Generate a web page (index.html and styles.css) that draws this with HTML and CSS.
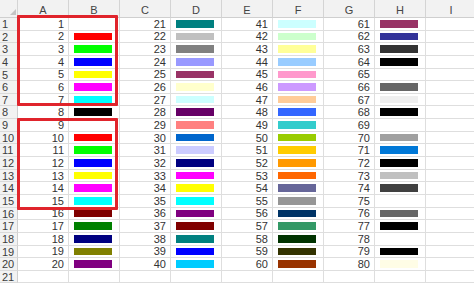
FILE: index.html
```html
<!DOCTYPE html>
<html lang="ja">
<head>
<meta charset="utf-8">
<title>ColorIndex</title>
<link rel="stylesheet" href="styles.css">
</head>
<body>
<div class="sheet">
  <div class="grid">
    <div class="hd corner"><svg width="18" height="18" viewBox="0 0 18 18"><path d="M16 9 L16 15 L10 15 Z" fill="#c4c4c4"/></svg></div>
    <div class="hd col">A</div><div class="hd col">B</div><div class="hd col">C</div><div class="hd col">D</div><div class="hd col">E</div><div class="hd col">F</div><div class="hd col">G</div><div class="hd col">H</div><div class="hd col">I</div>

    <div class="rh">1</div><div class="c n">1</div><div class="c"></div><div class="c n">21</div><div class="c"><i class="sw" style="background:#008080"></i></div><div class="c n">41</div><div class="c"><i class="sw" style="background:#ccffff"></i></div><div class="c n">61</div><div class="c"><i class="sw" style="background:#993366"></i></div><div class="c"></div>
    <div class="rh">2</div><div class="c n">2</div><div class="c"><i class="sw" style="background:#ff0000"></i></div><div class="c n">22</div><div class="c"><i class="sw" style="background:#c0c0c0"></i></div><div class="c n">42</div><div class="c"><i class="sw" style="background:#ccffcc"></i></div><div class="c n">62</div><div class="c"><i class="sw" style="background:#333399"></i></div><div class="c"></div>
    <div class="rh">3</div><div class="c n">3</div><div class="c"><i class="sw" style="background:#00ff00"></i></div><div class="c n">23</div><div class="c"><i class="sw" style="background:#808080"></i></div><div class="c n">43</div><div class="c"><i class="sw" style="background:#ffff99"></i></div><div class="c n">63</div><div class="c"><i class="sw" style="background:#333333"></i></div><div class="c"></div>
    <div class="rh">4</div><div class="c n">4</div><div class="c"><i class="sw" style="background:#0000ff"></i></div><div class="c n">24</div><div class="c"><i class="sw" style="background:#9999ff"></i></div><div class="c n">44</div><div class="c"><i class="sw" style="background:#99ccff"></i></div><div class="c n">64</div><div class="c"><i class="sw" style="background:#000000"></i></div><div class="c"></div>
    <div class="rh">5</div><div class="c n">5</div><div class="c"><i class="sw" style="background:#ffff00"></i></div><div class="c n">25</div><div class="c"><i class="sw" style="background:#993366"></i></div><div class="c n">45</div><div class="c"><i class="sw" style="background:#ff99cc"></i></div><div class="c n">65</div><div class="c"></div><div class="c"></div>
    <div class="rh">6</div><div class="c n">6</div><div class="c"><i class="sw" style="background:#ff00ff"></i></div><div class="c n">26</div><div class="c"><i class="sw" style="background:#ffffcc"></i></div><div class="c n">46</div><div class="c"><i class="sw" style="background:#cc99ff"></i></div><div class="c n">66</div><div class="c"><i class="sw" style="background:#666666"></i></div><div class="c"></div>
    <div class="rh">7</div><div class="c n">7</div><div class="c"><i class="sw" style="background:#00ffff"></i></div><div class="c n">27</div><div class="c"><i class="sw" style="background:#ccffff"></i></div><div class="c n">47</div><div class="c"><i class="sw" style="background:#ffcc99"></i></div><div class="c n">67</div><div class="c"><i class="sw" style="background:#efefef"></i></div><div class="c"></div>
    <div class="rh">8</div><div class="c n">8</div><div class="c"><i class="sw" style="background:#000000"></i></div><div class="c n">28</div><div class="c"><i class="sw" style="background:#660066"></i></div><div class="c n">48</div><div class="c"><i class="sw" style="background:#3366ff"></i></div><div class="c n">68</div><div class="c"><i class="sw" style="background:#000000"></i></div><div class="c"></div>
    <div class="rh">9</div><div class="c n">9</div><div class="c"></div><div class="c n">29</div><div class="c"><i class="sw" style="background:#ff8080"></i></div><div class="c n">49</div><div class="c"><i class="sw" style="background:#33cccc"></i></div><div class="c n">69</div><div class="c"></div><div class="c"></div>
    <div class="rh">10</div><div class="c n">10</div><div class="c"><i class="sw" style="background:#ff0000"></i></div><div class="c n">30</div><div class="c"><i class="sw" style="background:#0066cc"></i></div><div class="c n">50</div><div class="c"><i class="sw" style="background:#99cc00"></i></div><div class="c n">70</div><div class="c"><i class="sw" style="background:#a0a0a0"></i></div><div class="c"></div>
    <div class="rh">11</div><div class="c n">11</div><div class="c"><i class="sw" style="background:#00ff00"></i></div><div class="c n">31</div><div class="c"><i class="sw" style="background:#ccccff"></i></div><div class="c n">51</div><div class="c"><i class="sw" style="background:#ffcc00"></i></div><div class="c n">71</div><div class="c"><i class="sw" style="background:#0078d7"></i></div><div class="c"></div>
    <div class="rh">12</div><div class="c n">12</div><div class="c"><i class="sw" style="background:#0000ff"></i></div><div class="c n">32</div><div class="c"><i class="sw" style="background:#000080"></i></div><div class="c n">52</div><div class="c"><i class="sw" style="background:#ff9900"></i></div><div class="c n">72</div><div class="c"><i class="sw" style="background:#000000"></i></div><div class="c"></div>
    <div class="rh">13</div><div class="c n">13</div><div class="c"><i class="sw" style="background:#ffff00"></i></div><div class="c n">33</div><div class="c"><i class="sw" style="background:#ff00ff"></i></div><div class="c n">53</div><div class="c"><i class="sw" style="background:#ff6600"></i></div><div class="c n">73</div><div class="c"><i class="sw" style="background:#c0c0c0"></i></div><div class="c"></div>
    <div class="rh">14</div><div class="c n">14</div><div class="c"><i class="sw" style="background:#ff00ff"></i></div><div class="c n">34</div><div class="c"><i class="sw" style="background:#ffff00"></i></div><div class="c n">54</div><div class="c"><i class="sw" style="background:#666699"></i></div><div class="c n">74</div><div class="c"><i class="sw" style="background:#404040"></i></div><div class="c"></div>
    <div class="rh">15</div><div class="c n">15</div><div class="c"><i class="sw" style="background:#00ffff"></i></div><div class="c n">35</div><div class="c"><i class="sw" style="background:#00ffff"></i></div><div class="c n">55</div><div class="c"><i class="sw" style="background:#969696"></i></div><div class="c n">75</div><div class="c"></div><div class="c"></div>
    <div class="rh">16</div><div class="c n">16</div><div class="c"><i class="sw" style="background:#800000"></i></div><div class="c n">36</div><div class="c"><i class="sw" style="background:#800080"></i></div><div class="c n">56</div><div class="c"><i class="sw" style="background:#003366"></i></div><div class="c n">76</div><div class="c"><i class="sw" style="background:#666666"></i></div><div class="c"></div>
    <div class="rh">17</div><div class="c n">17</div><div class="c"><i class="sw" style="background:#008000"></i></div><div class="c n">37</div><div class="c"><i class="sw" style="background:#800000"></i></div><div class="c n">57</div><div class="c"><i class="sw" style="background:#339966"></i></div><div class="c n">77</div><div class="c"><i class="sw" style="background:#000000"></i></div><div class="c"></div>
    <div class="rh">18</div><div class="c n">18</div><div class="c"><i class="sw" style="background:#000080"></i></div><div class="c n">38</div><div class="c"><i class="sw" style="background:#008080"></i></div><div class="c n">58</div><div class="c"><i class="sw" style="background:#003300"></i></div><div class="c n">78</div><div class="c"></div><div class="c"></div>
    <div class="rh">19</div><div class="c n">19</div><div class="c"><i class="sw" style="background:#808000"></i></div><div class="c n">39</div><div class="c"><i class="sw" style="background:#0000ff"></i></div><div class="c n">59</div><div class="c"><i class="sw" style="background:#333300"></i></div><div class="c n">79</div><div class="c"><i class="sw" style="background:#000000"></i></div><div class="c"></div>
    <div class="rh">20</div><div class="c n">20</div><div class="c"><i class="sw" style="background:#800080"></i></div><div class="c n">40</div><div class="c"><i class="sw" style="background:#00ccff"></i></div><div class="c n">60</div><div class="c"><i class="sw" style="background:#993300"></i></div><div class="c n">80</div><div class="c"><i class="sw" style="background:#fffde6"></i></div><div class="c"></div>
    <div class="rh">21</div><div class="c"></div><div class="c"></div><div class="c"></div><div class="c"></div><div class="c"></div><div class="c"></div><div class="c"></div><div class="c"></div><div class="c"></div>
  </div>
  <div class="box box1"></div>
  <div class="box box2"></div>
</div>
</body>
</html>
```

FILE: styles.css
```css
* { box-sizing: border-box; }
html, body {
  margin: 0;
  padding: 0;
  background: #ffffff;
  overflow: hidden;
}
.sheet {
  position: relative;
  width: 474px;
  height: 284px;
  overflow: hidden;
  font-family: "Liberation Sans", Arial, sans-serif;
  font-size: 11px;
  color: #333333;
}
.grid {
  display: grid;
  grid-template-columns: 18px repeat(9, 51px);
  grid-template-rows: 18px;
  grid-auto-rows: 12.65px;
}
.hd {
  background: #f2f2f2;
  border-right: 1px solid #d4d4d4;
  border-bottom: 1px solid #cfcfcf;
}
.corner {
  position: relative;
}
.corner svg {
  display: block;
}
.col {
  display: flex;
  align-items: flex-end;
  justify-content: center;
  line-height: 13px;
  color: #444444;
}
.rh {
  background: #f2f2f2;
  border-right: 1px solid #cfcfcf;
  border-bottom: 1px solid #dadada;
  padding-left: 2px;
  line-height: 12px;
  color: #3c3c3c;
}
.c {
  border-right: 1px solid #dedede;
  border-bottom: 1px solid #dedede;
  display: flex;
  align-items: stretch;
  padding: 2px 0 2px 5px;
}
.n {
  justify-content: flex-end;
  padding: 0 4px 0 0;
  line-height: 12px;
  align-items: center;
}
.sw {
  display: block;
  width: 38px;
}
.box {
  position: absolute;
  border: 3px solid #e0242c;
  border-radius: 1px;
}
.box1 {
  left: 17px;
  top: 15px;
  width: 101px;
  height: 91px;
}
.box2 {
  left: 17px;
  top: 118px;
  width: 101px;
  height: 92px;
}
```
